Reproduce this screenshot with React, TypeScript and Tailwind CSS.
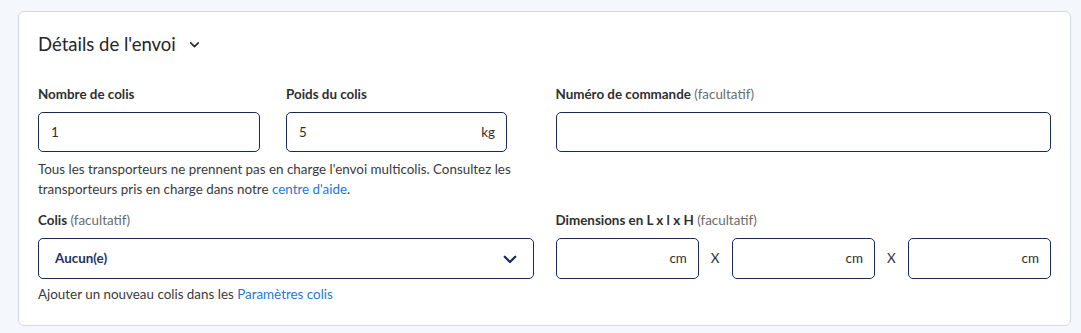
const font = { fontFamily: '"Lato", "Noto Sans", sans-serif' };

const Chevron = ({ className }: { className?: string }) => (
  <svg viewBox="0 0 24 24" fill="none" stroke="currentColor" strokeWidth={3} strokeLinecap="round" strokeLinejoin="round" className={className}>
    <path d="M5 9l7 7 7-7" />
  </svg>
);

const Label = ({ title, optional }: { title: string; optional?: boolean }) => (
  <div className="mb-2 text-[13.4px] leading-[20px] text-[#2f2f2f]">
    <span className="font-bold">{title}</span>
    {optional && <span className="text-[#6b6b6b]"> (facultatif)</span>}
  </div>
);

const Field = ({ value, unit, className }: { value?: string; unit?: string; className?: string }) => (
  <div className={`flex h-[40px] items-center justify-between rounded-[5px] border border-[#1b2a55] bg-white pl-[12px] pr-[11px] text-[13.4px] text-[#2f2f2f] ${className ?? ""}`}>
    <span>{value}</span>
    {unit && <span>{unit}</span>}
  </div>
);

export default function App() {
  return (
    <div className="min-h-screen bg-[#f4f7fc] pt-[11px] pl-[18px] pr-[10px]" style={font}>
      <div className="rounded-[6px] border border-[#d3d8e0] bg-white px-[19px] pt-[20px] pb-[21px]">
        <div className="flex items-center gap-[12px]">
          <h2 className="text-[18.5px] leading-[24px] text-[#262626]">Détails de l'envoi</h2>
          <Chevron className="h-[13px] w-[13px] text-[#2b2b2b]" />
        </div>

        <div className="mt-[28px] grid grid-cols-2 gap-x-[22px] gap-y-[11px]">
          <div>
            <div className="flex gap-[26px]">
              <div className="w-[222px]">
                <Label title="Nombre de colis" />
                <Field value="1" />
              </div>
              <div className="w-[221px]">
                <Label title="Poids du colis" />
                <Field value="5" unit="kg" />
              </div>
            </div>
            <p className="mt-[7px] w-[480px] text-[13.4px] leading-[20px] text-[#3a3a3a]">
              Tous les transporteurs ne prennent pas en charge l'envoi multicolis. Consultez les transporteurs pris en charge dans notre{" "}
              <a className="text-[#1f78d1]">centre d'aide</a>.
            </p>
          </div>

          <div>
            <Label title="Numéro de commande" optional />
            <Field />
          </div>

          <div>
            <Label title="Colis" optional />
            <div className="flex h-[41px] items-center justify-between rounded-[5px] border border-[#1b2a55] bg-white pl-[16px] pr-[14px]">
              <span className="text-[13.4px] font-bold text-[#243263]">Aucun(e)</span>
              <Chevron className="h-[18px] w-[18px] text-[#1b2a55]" />
            </div>
            <p className="mt-[5px] text-[13.4px] leading-[20px] text-[#3a3a3a]">
              Ajouter un nouveau colis dans les <a className="text-[#1f78d1]">Paramètres colis</a>
            </p>
          </div>

          <div>
            <Label title="Dimensions en L x l x H" optional />
            <div className="flex items-center gap-[12px]">
              <Field unit="cm" className="h-[41px] flex-1" />
              <span className="text-[13.4px] text-[#2f2f2f]">X</span>
              <Field unit="cm" className="h-[41px] flex-1" />
              <span className="text-[13.4px] text-[#2f2f2f]">X</span>
              <Field unit="cm" className="h-[41px] flex-1" />
            </div>
          </div>
        </div>
      </div>
    </div>
  );
}
